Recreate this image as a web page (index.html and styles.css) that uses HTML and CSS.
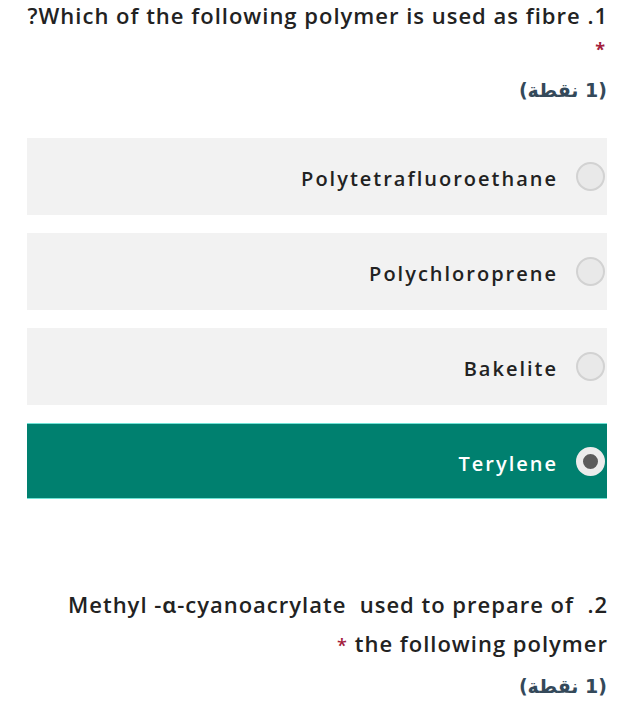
FILE: index.html
```html
<!DOCTYPE html>
<html lang="en">
<head>
    <meta charset="UTF-8">
    <meta name="viewport" content="width=device-width, initial-scale=1.0">
    <title>Quiz</title>
    <link rel="stylesheet" href="styles.css">
</head>
<body>
    <div class="form">
        <div class="question">
            <div class="q-title">?Which of the following polymer is used as fibre .1</div>
            <div class="required">*</div>
            <div class="points"><span dir="rtl">(1 نقطة)</span></div>
        </div>

        <div class="options">
            <div class="option">
                <span class="option-label">Polytetrafluoroethane</span>
                <span class="radio"></span>
            </div>
            <div class="option">
                <span class="option-label">Polychloroprene</span>
                <span class="radio"></span>
            </div>
            <div class="option">
                <span class="option-label">Bakelite</span>
                <span class="radio"></span>
            </div>
            <div class="option selected">
                <span class="option-label">Terylene</span>
                <span class="radio"></span>
            </div>
        </div>

        <div class="question second">
            <div class="q-title">Methyl -ɑ-cyanoacrylate&nbsp; used to prepare of &nbsp;.2</div>
            <div class="q-title"><span class="star">*</span> the following polymer</div>
            <div class="points small"><span dir="rtl">(1 نقطة)</span></div>
        </div>
    </div>
</body>
</html>
```

FILE: styles.css
```css
body {
    margin: 0;
    background: #ffffff;
    font-family: 'Open Sans', 'Noto Sans', sans-serif;
    color: #222222;
}

.form {
    padding: 0 14px 0 20px;
}

.question {
    text-align: right;
}

.q-title {
    font-size: 22px;
    font-weight: 600;
    line-height: 28px;
    letter-spacing: 1px;
    margin-right: -1px;
    white-space: nowrap;
}

.question:first-child .q-title {
    line-height: 30px;
}

.required {
    color: #a3203c;
    font-size: 18px;
    font-weight: 700;
    line-height: 20px;
    margin-top: 9px;
    padding-right: 2px;
}

.points {
    font-size: 19px;
    font-weight: 600;
    line-height: 24px;
    color: #34495a;
    margin-top: 19px;
    font-family: 'DejaVu Sans', 'Noto Sans', sans-serif;
}

.star {
    color: #a3203c;
    font-size: 18px;
}

.options {
    display: flex;
    flex-direction: column;
    gap: 18px;
    margin: 36px 0 0 7px;
}

.option {
    height: 77px;
    background: #f2f2f2;
    display: flex;
    align-items: center;
    justify-content: flex-end;
    gap: 18px;
}

.option-label {
    font-size: 20px;
    font-weight: 600;
    letter-spacing: 2px;
    color: #222222;
    padding-top: 4px;
}

.radio {
    width: 29px;
    height: 29px;
    border-radius: 50%;
    background: #e9e9e9;
    border: 2px solid #d2d2d2;
    box-sizing: border-box;
    margin-right: 2px;
}

.option.selected {
    background: #00806f;
    border-top: 1px solid #6fe3d6;
    border-bottom: 1px solid #6fe3d6;
    height: 76px;
    box-sizing: border-box;
}

.option.selected .option-label {
    color: #ffffff;
}

.option.selected .radio {
    background: #5b5b5b;
    border: 7px solid #ececec;
}

.second {
    margin-top: 86px;
}

.second .q-title {
    line-height: 39px;
}

.points.small {
    margin-top: 6px;
    line-height: 30px;
}
```
